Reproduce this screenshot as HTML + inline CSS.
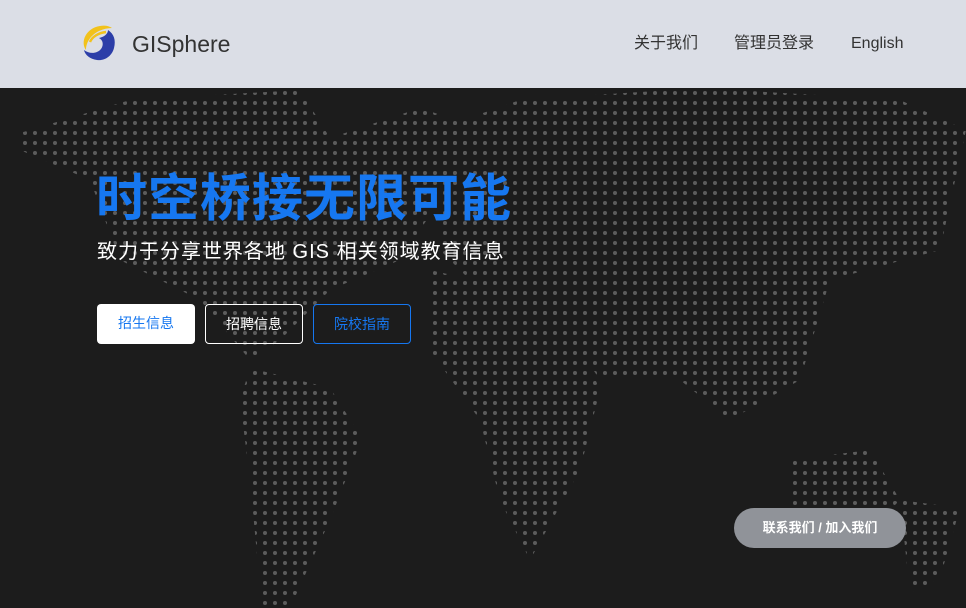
<!DOCTYPE html>
<html><head><meta charset="utf-8"><style>
*{margin:0;padding:0;box-sizing:border-box}
body{width:966px;height:608px;overflow:hidden;background:#1c1c1c;font-family:"Liberation Sans","Noto Sans CJK SC",sans-serif;position:relative}
.hd{position:absolute;left:0;top:0;width:966px;height:88px;background:#dbdee6}
.logo{position:absolute;left:132px;top:31px;font-size:23px;line-height:26px;color:#333}
.nav{position:absolute;top:34px;font-size:16px;line-height:20px;height:20px;color:#333}
svg.map{position:absolute;left:0;top:88px}
h1{position:absolute;left:96px;top:164px;font-size:51px;line-height:70px;font-weight:bold;color:#1677f0;letter-spacing:1px}
.sub{position:absolute;left:97px;top:238px;font-size:20px;line-height:28px;color:#fff;letter-spacing:1px}
.b{position:absolute;top:304px;height:40px;width:98px;border-radius:4px;font-size:14px;text-align:center;line-height:38px}
.c{position:absolute;left:734px;top:508px;width:172px;height:40px;border-radius:20px;background:#909399;color:#fff;font-size:13px;text-align:center;line-height:40px;font-weight:bold}
</style></head><body>
<svg class="map" width="966" height="520">
<defs><pattern id="d" width="10" height="10" patternUnits="userSpaceOnUse"><circle cx="5" cy="5" r="2" fill="#5c5c5c"/></pattern></defs>
<g fill="url(#d)">
<polygon points="20,45 130,12 300,2 330,50 420,20 480,40 440,112 400,172 330,202 280,252 250,272 200,212 120,172 90,92 20,62"/>
<polygon points="250,280 330,300 362,350 330,432 290,520 262,520 250,392 240,312"/>
<polygon points="440,40 520,12 700,0 900,12 966,42 940,162 830,192 800,292 730,332 680,292 600,292 560,232 490,212 440,162"/>
<polygon points="430,182 560,212 600,302 580,382 530,472 500,412 480,332 430,262"/>
<polygon points="790,372 870,362 900,412 860,452 790,432"/>
<polygon points="900,412 960,420 940,490 910,505"/>
</g></svg>
<div class="hd">
<svg style="position:absolute;left:80px;top:22px" width="42" height="42" viewBox="0 0 42 42">
<path d="M28 8c6 4 8 10 6 18-2 8-9 13-17 12C10 37 5 33 4 28c5 4 13 4 17-1 3-4 2-9-2-11 5-1 9-4 9-8z" fill="#2c3ea8"/>
<path d="M6 28C0 20 6 6 20 4c5-1 9 0 12 2-4 0-9 1-13 3C11 13 6 20 6 28z" fill="#f2c21b"/>
<path d="M10 20c2-5 8-9 16-10" stroke="#f2c21b" stroke-width="2.5" fill="none"/>
</svg>
<div class="logo">GISphere</div>
<div class="nav" style="left:634px">关于我们</div>
<div class="nav" style="left:734px">管理员登录</div>
<div class="nav" style="left:851px">English</div>
</div>
<h1>时空桥接无限可能</h1>
<div class="sub">致力于分享世界各地 GIS 相关领域教育信息</div>
<div class="b" style="left:97px;background:#fff;color:#1677f0">招生信息</div>
<div class="b" style="left:205px;border:1px solid #fff;color:#fff">招聘信息</div>
<div class="b" style="left:313px;border:1px solid #1677f0;color:#1677f0">院校指南</div>
<div class="c">联系我们 / 加入我们</div>
</body></html>
